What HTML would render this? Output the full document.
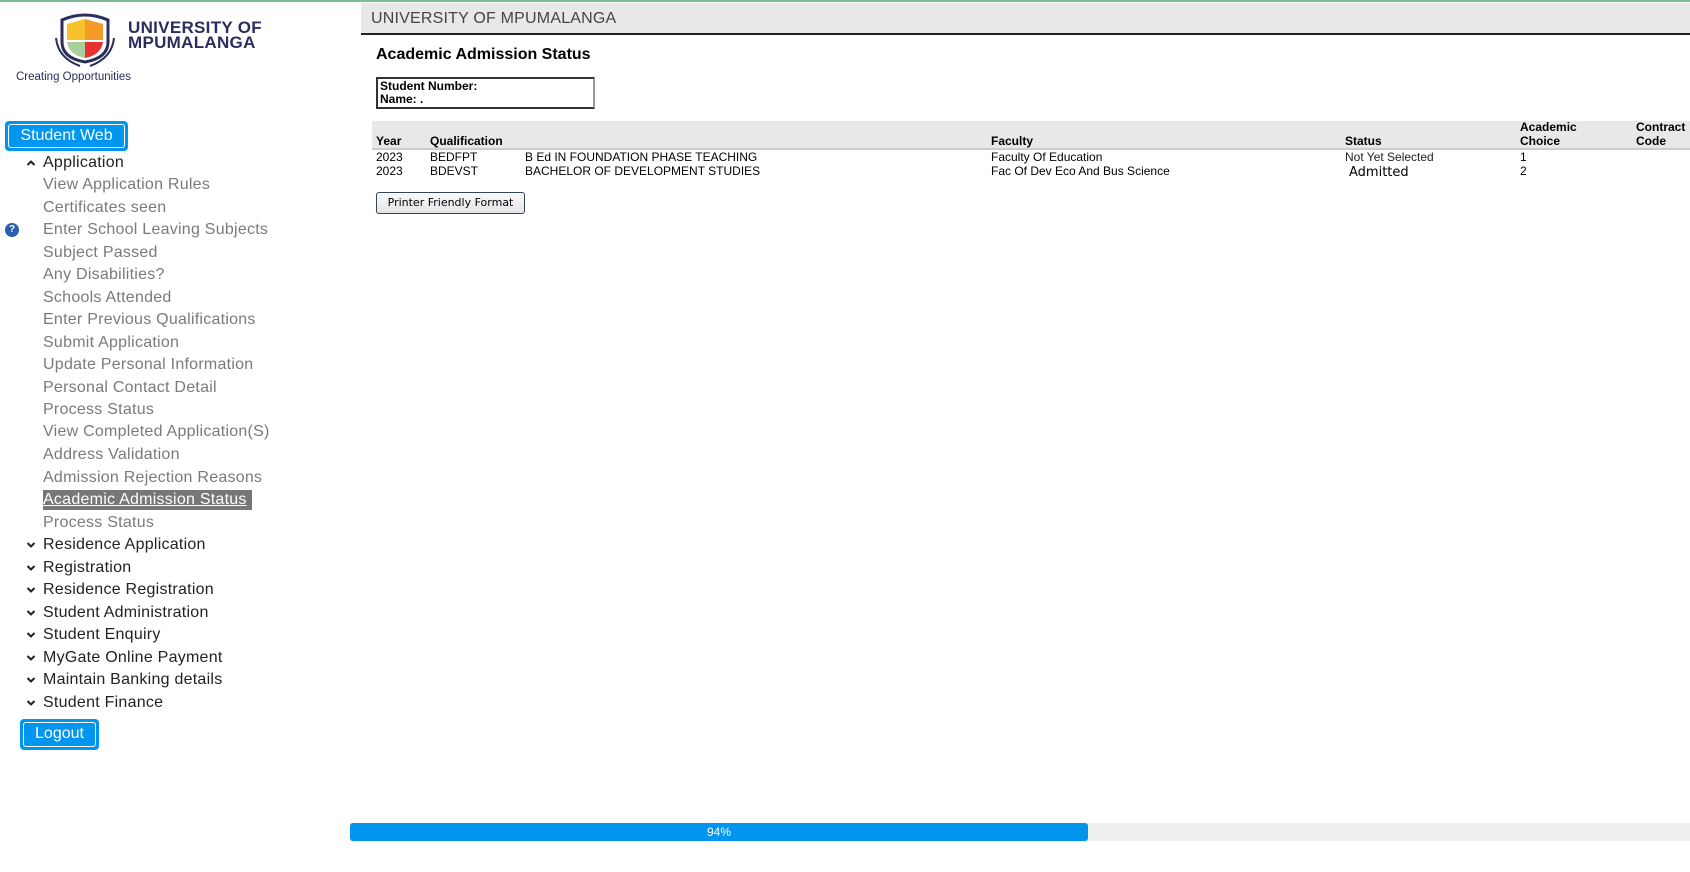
<!DOCTYPE html>
<html><head><meta charset="utf-8"><style>
*{margin:0;padding:0;box-sizing:border-box}
body{width:1690px;height:872px;position:relative;background:#fff;font-family:"Liberation Sans",Arial,sans-serif;overflow:hidden}
.abs{position:absolute}
.topline{left:0;top:0;width:1690px;height:2px;background:#7fb89a}
.hdr{left:361px;top:3px;width:1329px;height:32px;background:#e8e8e8;border-bottom:2px solid #222}
.hdr span{position:absolute;left:10px;top:7px;font-size:16px;color:#444;letter-spacing:.2px}
.menu div{position:absolute;left:43px;font-size:16px;letter-spacing:.25px;white-space:nowrap;line-height:20px}
.g{color:#7a7a7a}.d{color:#222}
.chev{position:absolute;left:-17px;top:6px;width:10px;height:8px}
.btn{position:absolute;background:#0095ee;border-radius:4px;color:#fff;font-size:16px;text-align:center}
.btn span{position:absolute;left:3px;top:3px;right:3px;bottom:3px;border:1px solid #fff;border-radius:3px;line-height:22px}
.t{font-size:12px;color:#000;position:absolute;white-space:nowrap}
.b{font-weight:bold}
</style></head><body>
<div class="abs topline"></div>
<svg class="abs" style="left:50px;top:12px" width="70" height="56" viewBox="0 0 70 56">
<path d="M12 8 Q35 -2 58 8 L58 30 Q58 46 35 50 Q12 46 12 30Z" fill="#fff" stroke="#2b2d5a" stroke-width="3"/>
<path d="M17 12 L35 7 L35 28 L17 28Z" fill="#f6c12b"/>
<path d="M35 7 L53 12 L53 28 L35 28Z" fill="#f39a2a"/>
<path d="M17 30 L35 30 L35 46 Q19 43 17 30Z" fill="#a9cf9c"/>
<path d="M35 30 L53 30 Q51 43 35 46Z" fill="#e8302e"/>
<path d="M6 26 Q8 46 30 54 M64 26 Q62 46 40 54" stroke="#2b2d5a" stroke-width="2" fill="none"/>
</svg>
<div class="abs" style="left:128px;top:20px;font-size:17px;font-weight:bold;color:#2b2d5a;line-height:15px;letter-spacing:.3px">UNIVERSITY OF<br>MPUMALANGA</div>
<div class="abs" style="left:16px;top:71px;font-size:11.5px;color:#2b2d5a">Creating Opportunities</div>
<div class="btn" style="left:5px;top:121px;width:123px;height:30px"><span>Student Web</span></div>
<div style="position:absolute;left:5px;top:223px;width:14px;height:14px;border-radius:50%;background:#2a5fb0;color:#fff;font-size:10px;font-weight:bold;text-align:center;line-height:14px">?</div>
<div class="menu">
<div class="d" style="top:153px"><svg class="chev" viewBox="0 0 10 8"><path d="M1.5 6 L5 2.5 L8.5 6" stroke="#222" stroke-width="2" fill="none"/></svg>Application</div>
<div class="g" style="top:175px">View Application Rules</div>
<div class="g" style="top:198px">Certificates seen</div>
<div class="g" style="top:220px">Enter School Leaving Subjects</div>
<div class="g" style="top:243px">Subject Passed</div>
<div class="g" style="top:265px">Any Disabilities?</div>
<div class="g" style="top:288px">Schools Attended</div>
<div class="g" style="top:310px">Enter Previous Qualifications</div>
<div class="g" style="top:333px">Submit Application</div>
<div class="g" style="top:355px">Update Personal Information</div>
<div class="g" style="top:378px">Personal Contact Detail</div>
<div class="g" style="top:400px">Process Status</div>
<div class="g" style="top:422px">View Completed Application(S)</div>
<div class="g" style="top:445px">Address Validation</div>
<div class="g" style="top:468px">Admission Rejection Reasons</div>
<div style="top:490px;background:#777;color:#fff;text-decoration:underline;padding-right:5px">Academic Admission Status</div>
<div class="g" style="top:513px">Process Status</div>
<div class="d" style="top:535px"><svg class="chev" viewBox="0 0 10 8"><path d="M1.5 2 L5 5.5 L8.5 2" stroke="#222" stroke-width="2" fill="none"/></svg>Residence Application</div>
<div class="d" style="top:558px"><svg class="chev" viewBox="0 0 10 8"><path d="M1.5 2 L5 5.5 L8.5 2" stroke="#222" stroke-width="2" fill="none"/></svg>Registration</div>
<div class="d" style="top:580px"><svg class="chev" viewBox="0 0 10 8"><path d="M1.5 2 L5 5.5 L8.5 2" stroke="#222" stroke-width="2" fill="none"/></svg>Residence Registration</div>
<div class="d" style="top:603px"><svg class="chev" viewBox="0 0 10 8"><path d="M1.5 2 L5 5.5 L8.5 2" stroke="#222" stroke-width="2" fill="none"/></svg>Student Administration</div>
<div class="d" style="top:625px"><svg class="chev" viewBox="0 0 10 8"><path d="M1.5 2 L5 5.5 L8.5 2" stroke="#222" stroke-width="2" fill="none"/></svg>Student Enquiry</div>
<div class="d" style="top:648px"><svg class="chev" viewBox="0 0 10 8"><path d="M1.5 2 L5 5.5 L8.5 2" stroke="#222" stroke-width="2" fill="none"/></svg>MyGate Online Payment</div>
<div class="d" style="top:670px"><svg class="chev" viewBox="0 0 10 8"><path d="M1.5 2 L5 5.5 L8.5 2" stroke="#222" stroke-width="2" fill="none"/></svg>Maintain Banking details</div>
<div class="d" style="top:693px"><svg class="chev" viewBox="0 0 10 8"><path d="M1.5 2 L5 5.5 L8.5 2" stroke="#222" stroke-width="2" fill="none"/></svg>Student Finance</div>
</div>
<div class="btn" style="left:20px;top:719px;width:79px;height:31px"><span>Logout</span></div>

<div class="abs hdr"><span>UNIVERSITY OF MPUMALANGA</span></div>
<div class="abs" style="left:376px;top:46px;font-size:16px;font-weight:bold">Academic Admission Status</div>
<div class="abs" style="left:376px;top:77px;width:219px;height:32px;border:2px solid #333;border-right-color:#999;font-size:12px;font-weight:bold;line-height:13px;padding:1px 2px">Student Number:<br>Name: .</div>
<div class="abs" style="left:372px;top:121px;width:1318px;height:29px;background:#e8e8e8;border-bottom:2px solid #ccc"></div>
<div class="t b" style="left:376px;top:134px">Year</div>
<div class="t b" style="left:430px;top:134px">Qualification</div>
<div class="t b" style="left:991px;top:134px">Faculty</div>
<div class="t b" style="left:1345px;top:134px">Status</div>
<div class="t b" style="left:1520px;top:120px;line-height:14px">Academic<br>Choice</div>
<div class="t b" style="left:1636px;top:120px;line-height:14px">Contract<br>Code</div>
<div class="t" style="left:376px;top:150px">2023</div>
<div class="t" style="left:430px;top:150px">BEDFPT</div>
<div class="t" style="left:525px;top:150px">B Ed IN FOUNDATION PHASE TEACHING</div>
<div class="t" style="left:991px;top:150px">Faculty Of Education</div>
<div class="t" style="left:1345px;top:150px;color:#222">Not Yet Selected</div>
<div class="t" style="left:1520px;top:150px">1</div>
<div class="t" style="left:376px;top:164px">2023</div>
<div class="t" style="left:430px;top:164px">BDEVST</div>
<div class="t" style="left:525px;top:164px">BACHELOR OF DEVELOPMENT STUDIES</div>
<div class="t" style="left:991px;top:164px">Fac Of Dev Eco And Bus Science</div>
<div class="t" style="left:1349px;top:165px;font-family:'DejaVu Sans',sans-serif;font-size:13px">Admitted</div>
<div class="t" style="left:1520px;top:164px">2</div>
<div class="abs" style="left:376px;top:192px;width:149px;height:22px;border:1px solid #345;border-radius:3px;background:linear-gradient(#fafafa,#e4e4e4);font-family:'DejaVu Sans',sans-serif;font-size:11px;text-align:center;line-height:20px">Printer Friendly Format</div>

<div class="abs" style="left:350px;top:823px;width:1340px;height:18px;background:#efefef"></div>
<div class="abs" style="left:350px;top:823px;width:738px;height:18px;background:#0096ef;border-radius:3px;color:#fff;font-size:12px;text-align:center;line-height:18px">94%</div>
</body></html>
